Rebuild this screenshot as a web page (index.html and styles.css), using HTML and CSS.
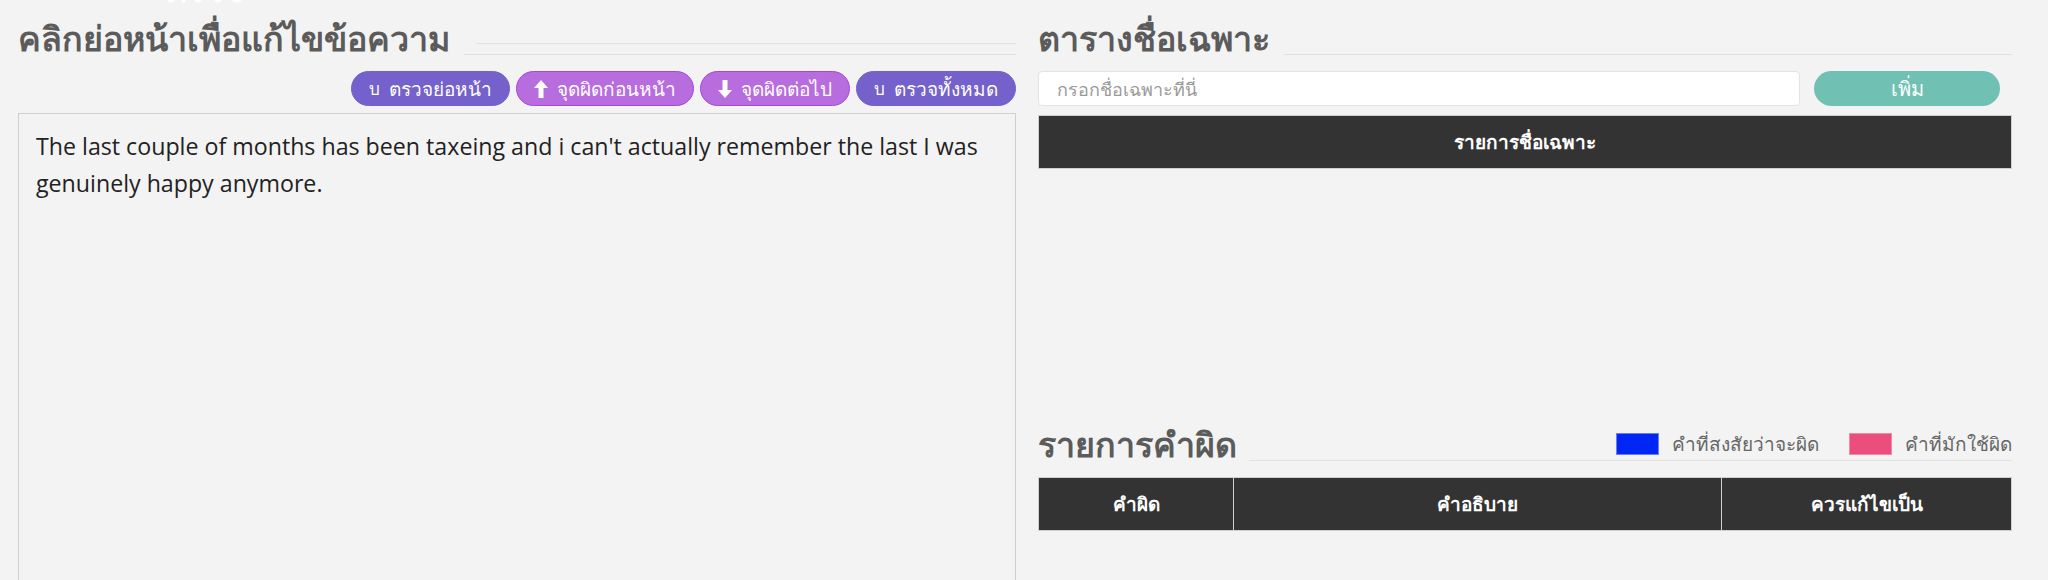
FILE: index.html
```html
<!DOCTYPE html>
<html lang="th">
<head>
<meta charset="utf-8">
<title>ตรวจคำผิด</title>
<link rel="stylesheet" href="styles.css">
</head>
<body>
<div class="page">
  <div class="banner">ตรวจ</div>
  <section class="col col-left">
    <div class="sec-head">
      <h2 class="sec-title">คลิกย่อหน้าเพื่อแก้ไขข้อความ</h2>
      <div class="rule rule-double"></div>
    </div>
    <div class="toolbar">
      <button class="btn btn-indigo"><span class="ico-b">บ</span>ตรวจย่อหน้า</button>
      <button class="btn btn-violet"><svg class="arrow" viewBox="0 0 14 18" width="14" height="18"><path d="M7 0 L14 8 L9.5 8 L9.5 18 L4.5 18 L4.5 8 L0 8 Z" fill="#fff"/></svg>จุดผิดก่อนหน้า</button>
      <button class="btn btn-violet"><svg class="arrow" viewBox="0 0 14 18" width="14" height="18"><path d="M7 18 L14 10 L9.5 10 L9.5 0 L4.5 0 L4.5 10 L0 10 Z" fill="#fff"/></svg>จุดผิดต่อไป</button>
      <button class="btn btn-indigo"><span class="ico-b">บ</span>ตรวจทั้งหมด</button>
    </div>
    <div class="editor">
      <p>The last couple of months has been taxeing and i can't actually remember the last I was genuinely happy anymore.</p>
    </div>
  </section>
  <section class="col col-right">
    <div class="sec-head">
      <h2 class="sec-title">ตารางชื่อเฉพาะ</h2>
      <div class="rule"></div>
    </div>
    <div class="add-row">
      <input class="name-input" type="text" placeholder="กรอกชื่อเฉพาะที่นี่">
      <button class="btn-add">เพิ่ม</button>
    </div>
    <table class="dark-table">
      <thead><tr><th>รายการชื่อเฉพาะ</th></tr></thead>
    </table>
    <div class="filler"></div>
    <div class="sec-head sec-errors">
      <h2 class="sec-title">รายการคำผิด</h2>
      <div class="rule rule-legend">
        <div class="legend">
          <span class="swatch swatch-blue"></span><span class="legend-text">คำที่สงสัยว่าจะผิด</span>
          <span class="swatch swatch-pink"></span><span class="legend-text">คำที่มักใช้ผิด</span>
        </div>
      </div>
    </div>
    <table class="dark-table err-table">
      <thead><tr><th class="c1">คำผิด</th><th class="c2">คำอธิบาย</th><th class="c3">ควรแก้ไขเป็น</th></tr></thead>
    </table>
  </section>
</div>
</body>
</html>
```
FILE: styles.css
```css
html, body {
  margin: 0;
  padding: 0;
  background: #f3f3f3;
  font-family: "Noto Sans", "Open Sans", sans-serif;
  overflow: hidden;
}
.page {
  position: relative;
  display: flex;
  gap: 22px;
  padding: 0 36px 0 18px;
  height: 580px;
  box-sizing: border-box;
}
.banner {
  position: absolute;
  left: 165px;
  top: -31px;
  color: #fff;
  font-size: 34px;
  font-weight: bold;
  line-height: 40px;
}
.col {
  display: flex;
  flex-direction: column;
}
.col-left { width: 998px; }
.col-right { width: 974px; }

.sec-head {
  display: flex;
  align-items: flex-end;
  height: 55px;
}
.sec-title {
  margin: 0;
  font-size: 34px;
  font-weight: bold;
  color: #5b5b5b;
  line-height: 40px;
  white-space: nowrap;
  margin-bottom: -3px;
}
.rule {
  flex: 1;
  border-bottom: 1px solid #e1e1e1;
  margin-left: 14px;
  position: relative;
}
.rule-double::before {
  content: "";
  position: absolute;
  left: 12px;
  right: 0;
  top: -11px;
  border-top: 1px solid #e1e1e1;
}

.toolbar {
  display: flex;
  justify-content: flex-end;
  gap: 6px;
  margin-top: 16px;
}
.btn {
  height: 35px;
  border-radius: 18px;
  border: 1px solid transparent;
  color: #fff;
  font-family: inherit;
  font-size: 19px;
  padding: 0 17px;
  display: flex;
  align-items: center;
  gap: 9px;
  cursor: pointer;
}
.btn-indigo { background: #7461cb; border-color: #7461cb; }
.btn-violet { background: #b86ddf; border-color: #a546dd; }
.ico-b { font-size: 17px; }
.arrow { display: block; }

.editor {
  margin-top: 7px;
  flex: 1;
  border: 1px solid #cfcfcf;
  border-bottom: none;
  background: #f3f3f3;
  padding: 14px 17px;
}
.editor p {
  margin: 0;
  font-family: "Open Sans", sans-serif;
  font-size: 23.2px;
  line-height: 37px;
  color: #222;
}

.add-row {
  display: flex;
  gap: 14px;
  margin-top: 16px;
  padding-right: 12px;
}
.name-input {
  flex: 1;
  height: 35px;
  box-sizing: border-box;
  border: 1px solid #e3e3e3;
  border-radius: 4px;
  background: #fff;
  padding: 0 18px;
  font-family: inherit;
  font-size: 18px;
  color: #333;
}
.name-input::placeholder { color: #9a9a9a; }
.btn-add {
  width: 186px;
  height: 35px;
  border: none;
  border-radius: 18px;
  background: #70c1b3;
  color: #fff;
  font-family: inherit;
  font-size: 20px;
}

.dark-table {
  border-collapse: collapse;
  width: 100%;
  margin-top: 9px;
}
.dark-table th {
  background: #333;
  color: #fff;
  height: 52px;
  font-size: 19px;
  font-weight: bold;
  border: 1px solid #cfcfcf;
  padding: 0;
}
.filler { flex: none; height: 240px; }

.sec-errors { height: 52px; }
.rule-legend {
  display: flex;
  justify-content: flex-end;
  align-items: flex-end;
  margin-left: 12px;
}
.legend {
  display: flex;
  align-items: center;
  margin-bottom: 1px;
}
.swatch {
  width: 43px;
  height: 22px;
  display: block;
  box-sizing: border-box;
}
.swatch-blue { background: #0026f5; border: 1px solid #6d7ff0; }
.swatch-pink { background: #eb4d7c; border: 1px solid #f08aa8; margin-left: 30px; }
.legend-text {
  color: #666;
  font-size: 19px;
  margin-left: 13px;
}
.err-table { margin-top: 16px; }
.err-table .c1 { width: 194px; }
.err-table .c2 { width: 487px; }
```
